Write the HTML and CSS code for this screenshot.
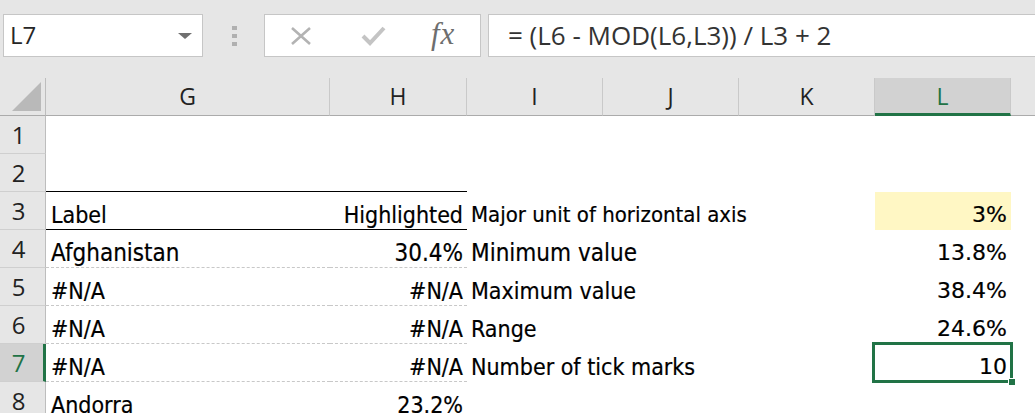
FILE: index.html
```html
<!DOCTYPE html>
<html>
<head>
<meta charset="utf-8">
<link rel="stylesheet" href="styles.css">
</head>
<body>
<div class="toolbar">
  <div class="namebox">
    <span class="name">L7</span>
    <svg class="dd" width="14" height="6" viewBox="0 0 14 6"><polygon points="0,0 14,0 7,6" fill="#707070"/></svg>
  </div>
  <div class="grip"><i></i><i></i><i></i></div>
  <div class="fbuttons">
    <svg class="ico-x" width="22" height="18" viewBox="0 0 22 18"><path d="M2 1 L20 17 M20 1 L2 17" stroke="#b3b3b3" stroke-width="2.6" fill="none"/></svg>
    <svg class="ico-check" width="25" height="20" viewBox="0 0 25 20"><path d="M2 10 L9 17 L23 2" stroke="#c4c4c4" stroke-width="4" fill="none" stroke-linejoin="miter"/></svg>
    <span class="fx">fx</span>
  </div>
  <div class="formula">= (L6 - MOD(L6,L3)) / L3 + 2</div>
</div>

<div class="sheet">
  <div class="hd corner"><svg width="30" height="30" viewBox="0 0 30 30"><polygon points="29,0 29,29 0,29" fill="#b9b9b9"/></svg></div>
  <div class="hd col">G</div>
  <div class="hd col">H</div>
  <div class="hd col">I</div>
  <div class="hd col">J</div>
  <div class="hd col">K</div>
  <div class="hd col col-sel">L</div>
  <div class="hd col col-end"></div>

  <div class="rh">1</div><div class="c"></div><div class="c"></div><div class="c"></div><div class="c"></div><div class="c"></div><div class="c"></div><div class="c"></div>
  <div class="rh">2</div><div class="c b-top"></div><div class="c b-top"></div><div class="c"></div><div class="c"></div><div class="c"></div><div class="c"></div><div class="c"></div>

  <div class="rh">3</div>
  <div class="c b-solid">Label</div>
  <div class="c b-solid r">Highlighted</div>
  <div class="c span3 sm">Major unit of horizontal axis</div>
  <div class="c r val yellow">3%</div>
  <div class="c"></div>

  <div class="rh">4</div>
  <div class="c b-dash lg">Afghanistan</div>
  <div class="c b-dash r lg">30.4%</div>
  <div class="c span3 lg">Minimum value</div>
  <div class="c r val">13.8%</div>
  <div class="c"></div>

  <div class="rh">5</div>
  <div class="c b-dash">#N/A</div>
  <div class="c b-dash r">#N/A</div>
  <div class="c span3">Maximum value</div>
  <div class="c r val">38.4%</div>
  <div class="c"></div>

  <div class="rh">6</div>
  <div class="c b-dash">#N/A</div>
  <div class="c b-dash r">#N/A</div>
  <div class="c span3">Range</div>
  <div class="c r val">24.6%</div>
  <div class="c"></div>

  <div class="rh rh-sel">7</div>
  <div class="c b-dash">#N/A</div>
  <div class="c b-dash r">#N/A</div>
  <div class="c span3">Number of tick marks</div>
  <div class="c r val">10<span class="sel"></span><span class="handle"></span></div>
  <div class="c"></div>

  <div class="rh">8</div>
  <div class="c">Andorra</div>
  <div class="c r">23.2%</div>
  <div class="c span3"></div>
  <div class="c"></div>
  <div class="c"></div>
</div>
</body>
</html>
```

FILE: styles.css
```css
html, body {
  margin: 0;
  padding: 0;
  background: #ffffff;
  overflow: hidden;
}
body {
  width: 1035px;
  height: 413px;
}
.toolbar {
  display: flex;
  align-items: flex-start;
  height: 78px;
  box-sizing: border-box;
  padding-top: 14px;
  background: #e6e6e6;
}
.namebox {
  margin-left: 3px;
  width: 200px;
  height: 43px;
  box-sizing: border-box;
  border: 1px solid #c6c6c6;
  background: #fff;
  display: flex;
  align-items: center;
  justify-content: space-between;
  padding: 0 10px 0 6px;
  font-family: "Open Sans", sans-serif;
  font-size: 24px;
  color: #262626;
}
.name { margin-top: -2px; }
.dd { margin-top: 1px; }
.grip {
  width: 61px;
  height: 43px;
  display: flex;
  flex-direction: column;
  align-items: center;
  justify-content: center;
  gap: 4px;
  padding-left: 1px;
  box-sizing: border-box;
}
.grip i {
  display: block;
  width: 5px;
  height: 4px;
  background: #b0b0b0;
}
.fbuttons {
  width: 217px;
  height: 43px;
  box-sizing: border-box;
  border: 1px solid #c6c6c6;
  background: #fff;
  display: flex;
  align-items: center;
  padding-left: 25px;
}
.ico-x { margin-top: 1px; }
.ico-check { margin-left: 49px; margin-top: 1px; }
.fx {
  margin-left: 45px;
  font-family: "Liberation Serif", serif;
  font-style: italic;
  font-size: 31px;
  color: #6e6e6e;
  margin-top: -3px;
  letter-spacing: 1px;
}
.formula {
  flex: 1;
  margin-left: 7px;
  margin-right: -2px;
  height: 43px;
  box-sizing: border-box;
  border: 1px solid #c6c6c6;
  background: #fff;
  display: flex;
  align-items: center;
  padding-left: 19px;
  font-family: "Open Sans", sans-serif;
  font-size: 26px;
  color: #333;
  padding-bottom: 2px;
}

.sheet {
  display: grid;
  grid-template-columns: 46px 284px 137px 136px 136px 136px 136px 1fr;
  grid-template-rows: repeat(9, 38px);
  font-family: "DejaVu Sans Condensed", "DejaVu Sans", sans-serif;
  font-stretch: condensed;
  font-size: 23px;
  color: #000;
}
.hd {
  background: #e6e6e6;
  box-sizing: border-box;
  border-bottom: 1px solid #ababab;
  border-right: 1px solid #c9c9c9;
  font-family: "Open Sans", sans-serif;
  font-stretch: normal;
  font-size: 23px;
  color: #222;
  display: flex;
  align-items: center;
  justify-content: center;
  padding-bottom: 1px;
}
.corner {
  align-items: flex-end;
  justify-content: flex-end;
  padding: 0 3px 3px 0;
  border-right-color: #bdbdbd;
}
.col-end { border-right: 0; }
.col-sel {
  background: #d2d2d2;
  color: #217346;
  border-bottom: 3px solid #217346;
  padding-bottom: 0;
}
.rh {
  background: #e6e6e6;
  box-sizing: border-box;
  border-right: 1px solid #bdbdbd;
  border-bottom: 1px solid #cfcfcf;
  font-family: "Open Sans", sans-serif;
  font-stretch: normal;
  font-size: 24px;
  color: #222;
  display: flex;
  align-items: center;
  justify-content: center;
  padding-right: 8px;
}
.rh-sel {
  background: #d2d2d2;
  color: #217346;
  border-right: 3px solid #217346;
  padding-right: 6px;
}
.c {
  box-sizing: border-box;
  border-bottom: 1px solid transparent;
  display: flex;
  align-items: flex-end;
  padding: 0 5px 1px 5px;
  line-height: 26px;
  white-space: nowrap;
  position: relative;
  -webkit-text-stroke: 0.2px #000;
}
.c.r { justify-content: flex-end; padding-right: 4px; }
.c.sm { font-size: 22px; }
.c.lg { font-size: 24px; }
.c.val {
  font-family: "DejaVu Sans", sans-serif;
  font-stretch: normal;
  font-size: 22px;
}
.span3 { grid-column: span 3; padding-left: 4px; }
.b-top { border-bottom: 1px solid #000; }
.b-solid { border-bottom: 1px solid #000; }
.b-dash { border-bottom: 1px dashed #c8c8c8; }
.yellow { background: #fff7c4; }
.sel {
  position: absolute;
  left: -3px;
  top: -2px;
  right: -2px;
  bottom: -2px;
  border: 3px solid #217346;
  pointer-events: none;
}
.handle {
  position: absolute;
  right: -5px;
  bottom: -5px;
  width: 8px;
  height: 8px;
  background: #217346;
  border: 1px solid #fff;
  box-sizing: border-box;
}
```
